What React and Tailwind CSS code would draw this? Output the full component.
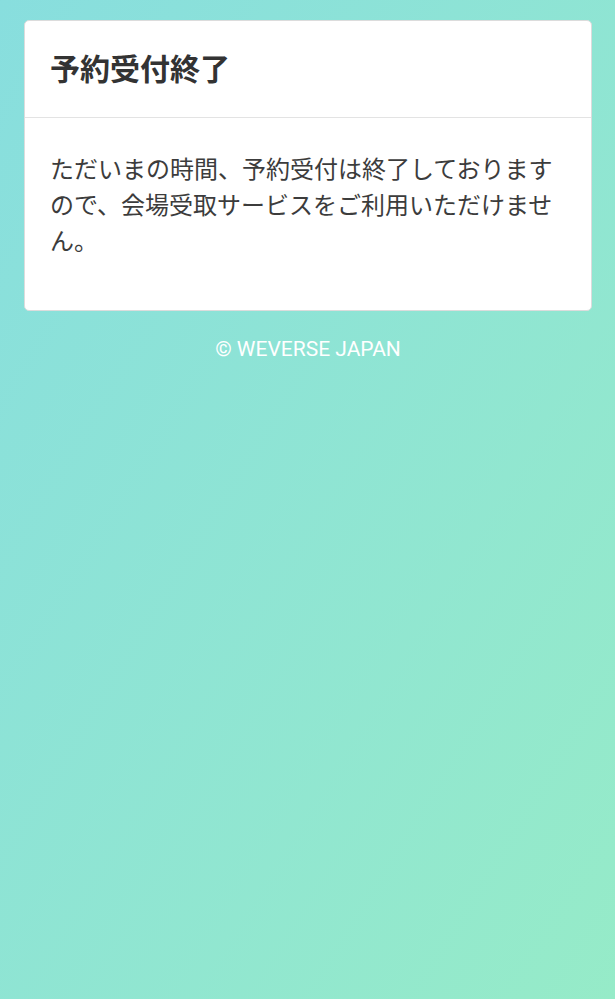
import React from 'react';

const App = () => {
    return (
        <div
            className="min-h-screen bg-gradient-to-br from-[#88dede] to-[#96ebc8] pl-6 pr-[23px] pt-5 pb-10"
            style={{ fontFamily: 'Roboto, "Noto Sans CJK JP", sans-serif' }}
        >
            {/* Card */}
            <div className="bg-white rounded-[5px] border border-[#dcdcdc] overflow-hidden">
                <div className="px-[25px] pt-[29px] pb-[27px] border-b border-[#e3e3e3]">
                    <h1 className="text-[30px] leading-[40px] font-bold text-[#333]">予約受付終了</h1>
                </div>
                <div className="px-[25px] pt-[34px] pb-[50px]">
                    <p className="text-[24px] leading-[36px] text-[#3c3c3c]">
                        ただいまの時間、予約受付は終了しておりますので、会場受取サービスをご利用いただけません。
                    </p>
                </div>
            </div>

            {/* Footer */}
            <p className="mt-[24px] text-center text-white text-[21px] leading-[28px]">© WEVERSE JAPAN</p>
        </div>
    );
};

export default App;
